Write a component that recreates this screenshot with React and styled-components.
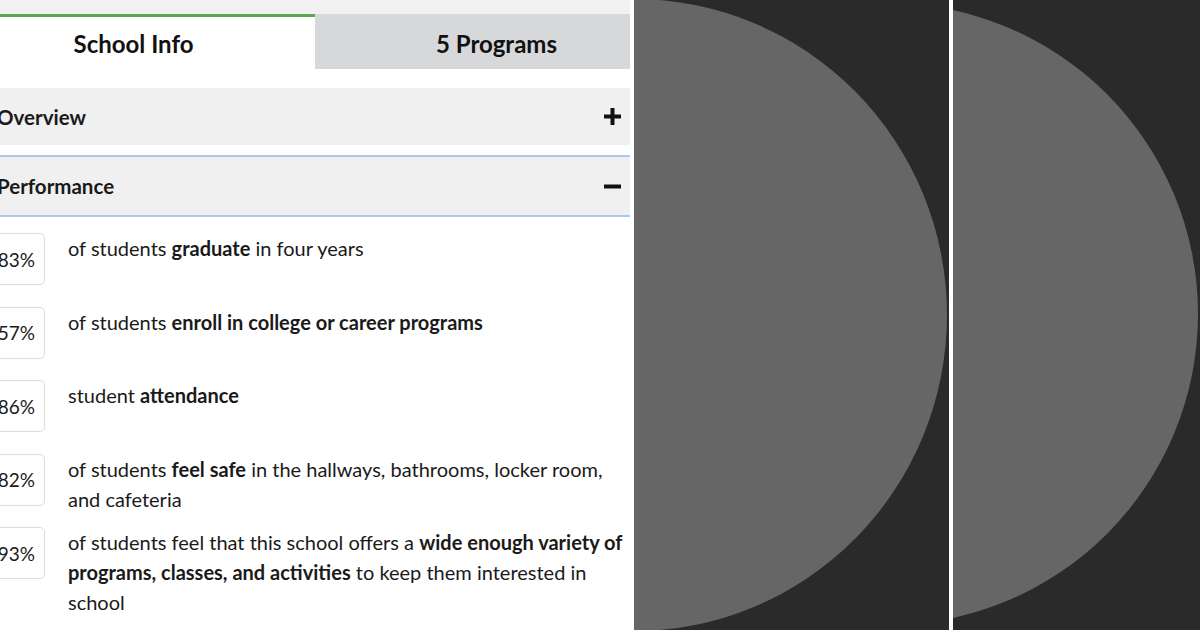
import React from 'react';
import styled, { createGlobalStyle } from 'styled-components';

const GlobalStyle = createGlobalStyle`
  html, body {
    margin: 0;
    padding: 0;
    background: #ffffff;
  }
  body {
    font-family: Lato, "Open Sans", sans-serif;
    color: #1a1a1a;
  }
`;

const Page = styled.div`
  display: flex;
  width: 1200px;
  height: 630px;
  gap: 4px;
  overflow: hidden;
  background: #ffffff;
`;

const InfoPanel = styled.div`
  width: 630px;
  flex: none;
  overflow: hidden;
  background: #ffffff;
`;

const TopStrip = styled.div`
  height: 14px;
  background: #f1f1f1;
`;

// the tab row is wider than the visible panel and gets clipped on both sides
const Tabs = styled.div`
  display: flex;
  height: 55px;
  margin: 0 -48px;
`;

const Tab = styled.div`
  flex: 1;
  display: flex;
  align-items: center;
  justify-content: center;
  box-sizing: border-box;
  font-size: 24px;
  font-weight: 700;
  color: #111;
  background: ${p => (p.$active ? '#ffffff' : '#d7d8da')};
  border-top: 3px solid ${p => (p.$active ? '#62a553' : '#d7d8da')};
`;

const Body = styled.div`
  margin-left: -12px;
  padding-top: 19px;
`;

const Section = styled.div`
  margin-bottom: 10px;
`;

const SectionHead = styled.div`
  display: flex;
  align-items: center;
  justify-content: space-between;
  height: ${p => (p.$open ? '58px' : '57px')};
  padding: 0 9px;
  background: #f0f0f0;
  border-top: ${p => (p.$open ? '2px solid #a9c9e8' : 'none')};
  border-bottom: ${p => (p.$open ? '2px solid #a9c9e8' : 'none')};
  font-size: 20.5px;
  font-weight: 700;
  color: #1a1a1a;
`;

const Toggle = styled.svg`
  width: 17px;
  height: 17px;
  flex: none;
`;

const Stats = styled.div`
  padding-top: 16px;
`;

const StatRow = styled.div`
  display: flex;
  align-items: flex-start;
  gap: 23px;
  height: 73.5px;
`;

const Pct = styled.div`
  width: 57px;
  height: 52px;
  flex: none;
  box-sizing: border-box;
  border: 1px solid #dcdcdc;
  border-radius: 5px;
  display: flex;
  align-items: center;
  justify-content: flex-end;
  padding-right: 9px;
  font-size: 19px;
  color: #1a1a1a;
`;

const StatText = styled.p`
  margin: 0;
  width: 562px;
  font-size: 20px;
  line-height: 30px;
  color: #1a1a1a;
  b {
    font-weight: 700;
  }
`;

const Slide = styled.div`
  height: 630px;
  flex: none;
  width: ${p => p.$w}px;
  background: #2a2a2a;
  svg {
    display: block;
  }
`;

const stats = [
  { pct: '83%', text: <>of students <b>graduate</b> in four years</> },
  { pct: '57%', text: <>of students <b>enroll in college or career programs</b></> },
  { pct: '86%', text: <>student <b>attendance</b></> },
  { pct: '82%', text: <>of students <b>feel safe</b> in the hallways, bathrooms, locker room, and cafeteria</> },
  {
    pct: '93%',
    text: (
      <>
        of students feel that this school offers a <b>wide enough variety of programs, classes, and activities</b> to
        keep them interested in school
      </>
    ),
  },
];

function Plus() {
  return (
    <Toggle viewBox="0 0 17 17">
      <rect x="6.5" y="0" width="4" height="17" fill="#111" />
      <rect x="0" y="6.5" width="17" height="4" fill="#111" />
    </Toggle>
  );
}

function Minus() {
  return (
    <Toggle viewBox="0 0 17 17">
      <rect x="0" y="6.5" width="17" height="4" fill="#111" />
    </Toggle>
  );
}

export default function App() {
  return (
    <>
      <GlobalStyle />
      <Page>
        <InfoPanel>
          <TopStrip />
          <Tabs>
            <Tab $active>School Info</Tab>
            <Tab>5 Programs</Tab>
          </Tabs>
          <Body>
            <Section>
              <SectionHead>
                Overview
                <Plus />
              </SectionHead>
            </Section>
            <Section>
              <SectionHead $open>
                Performance
                <Minus />
              </SectionHead>
              <Stats>
                {stats.map(s => (
                  <StatRow key={s.pct}>
                    <Pct>{s.pct}</Pct>
                    <StatText>{s.text}</StatText>
                  </StatRow>
                ))}
              </Stats>
            </Section>
          </Body>
        </InfoPanel>
        <Slide $w={315}>
          <svg width="315" height="630" viewBox="0 0 315 630">
            <ellipse cx="0" cy="315" rx="313" ry="316" fill="#666666" />
          </svg>
        </Slide>
        <Slide $w={247}>
          <svg width="247" height="630" viewBox="0 0 247 630">
            <circle cx="-66" cy="314" r="311" fill="#666666" />
          </svg>
        </Slide>
      </Page>
    </>
  );
}
